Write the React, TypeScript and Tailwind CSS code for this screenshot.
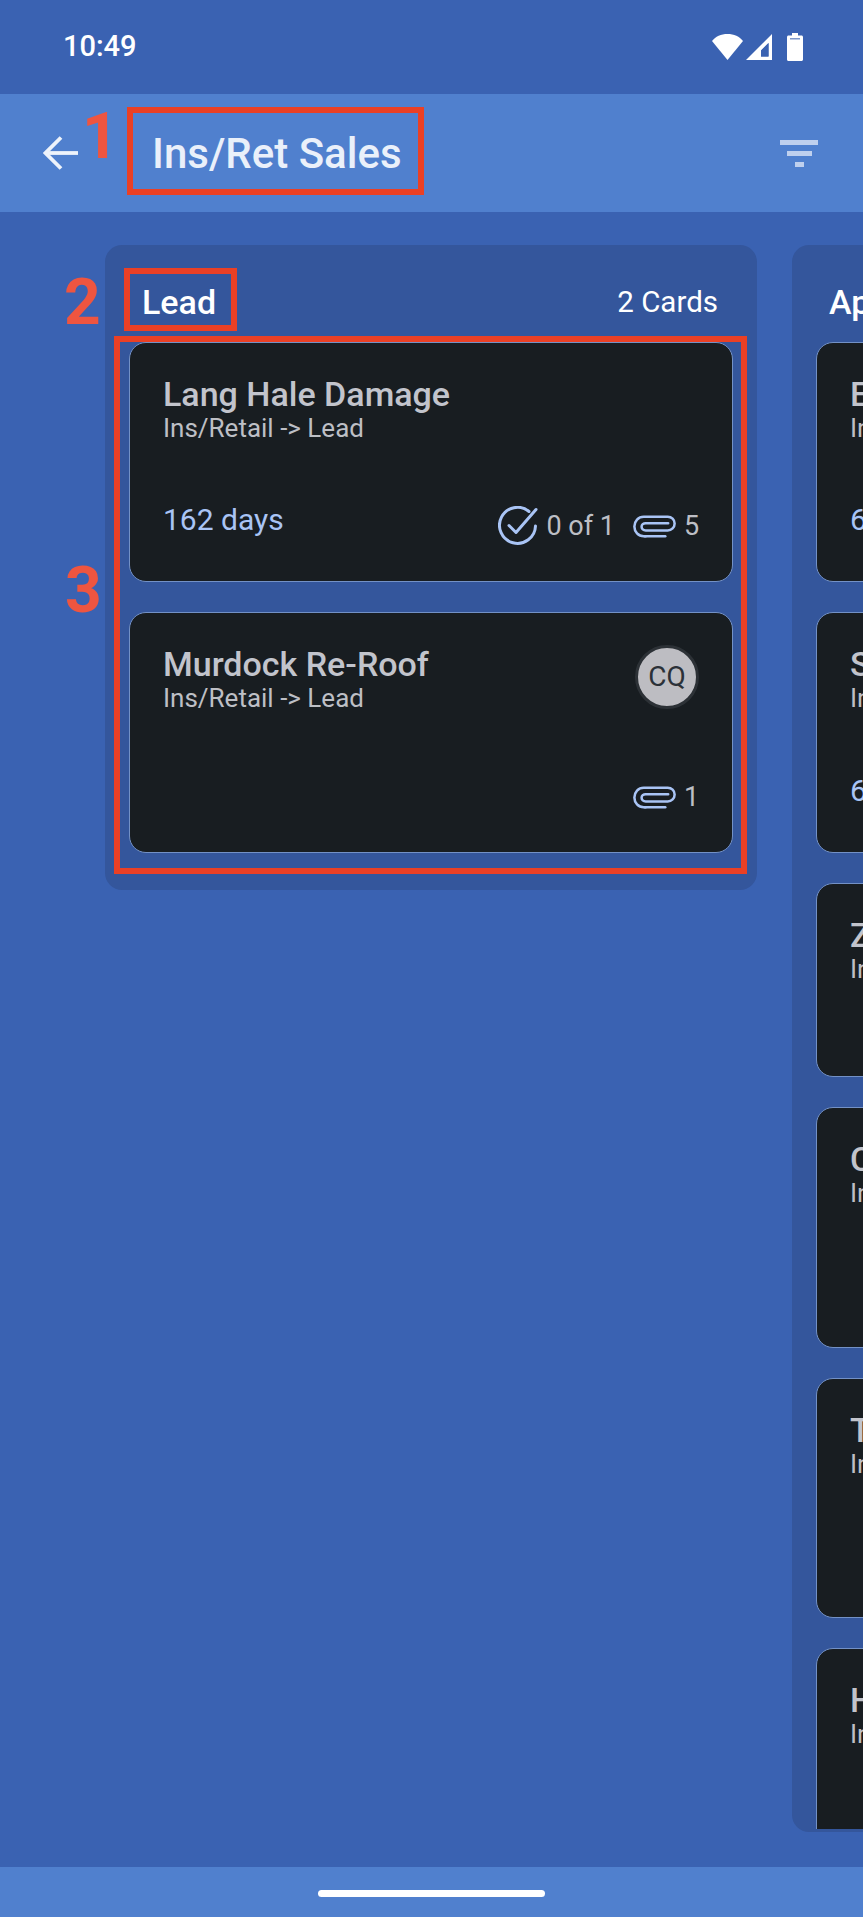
const roboto = "font-['Roboto',sans-serif]";

function ClipIcon() {
  return (
    <svg width="43" height="23" viewBox="0 0 44 23" fill="none" stroke="#A9C4F5" strokeWidth="2.6" strokeLinecap="round">
      <path d="M13 21.5H11C5.5 21.5 1.4 17 1.4 11.5C1.4 6 5.5 1.5 11 1.5H35.5C39.5 1.5 42.6 4.5 42.6 8.5C42.6 12.5 39.5 15.5 35.5 15.5H13C10.5 15.5 8.8 13.8 8.8 11.8C8.8 9.8 10.5 8.2 13 8.2H36" />
      <path d="M12 21.5H33" />
    </svg>
  );
}

function CheckIcon() {
  return (
    <svg width="40" height="40" viewBox="0 0 40 40" fill="none" stroke="#A9C4F5" strokeWidth="3" strokeLinecap="round" strokeLinejoin="round">
      <path d="M31 5.5A18 18 0 1 0 37.5 20" />
      <path d="M11 19.5L18 26.5L38 3.5" />
    </svg>
  );
}

type CardProps = {
  title: string;
  sub: string;
  height: string;
  days?: string;
  checks?: string;
  clips?: string;
  avatar?: string;
};

function Card({ title, sub, height, days, checks, clips, avatar }: CardProps) {
  return (
    <div className={`${height} shrink-0 rounded-[17px] border border-[#7391C6] bg-[#181D21] pl-[33px] pr-[34px] pt-[32px] pb-[35px] flex flex-col justify-between`}>
      <div className="flex justify-between">
        <div>
          <div className="text-[34px] leading-[38px] font-medium text-[#C2C4CC] whitespace-nowrap">{title}</div>
          <div className="text-[26px] leading-[30px] text-[#BDBFC5] whitespace-nowrap">{sub}</div>
        </div>
        {avatar && (
          <div className="w-[64px] h-[64px] -mr-[1px] rounded-full bg-[#BDBDC2] border-[3px] border-[#2C3136] flex items-center justify-center text-[28px] text-[#2B3138]">
            {avatar}
          </div>
        )}
      </div>
      <div className="flex justify-between items-center h-[40px]">
        <div className="text-[30px] leading-[32px] text-[#A9C4F5] -mt-[12px] whitespace-nowrap">{days}</div>
        <div className="flex items-center text-[27px] text-[#BDBFC5]">
          {checks && (
            <>
              <CheckIcon />
              <span className="ml-[8px] mr-[18px]">{checks}</span>
            </>
          )}
          {clips && (
            <>
              <ClipIcon />
              <span className="ml-[8px] w-[14px]">{clips}</span>
            </>
          )}
        </div>
      </div>
    </div>
  );
}

export default function App() {
  return (
    <div className={`${roboto} relative w-[863px] h-[1917px] overflow-hidden bg-[#3A62B2] flex flex-col`}>
      {/* Status bar */}
      <div className="h-[94px] shrink-0 flex items-center justify-between pl-[63px] pr-[60px] pb-[1px] text-white">
        <span className="text-[29px] font-medium">10:49</span>
        <div className="flex items-center">
          <svg width="31" height="26" viewBox="0 0 31 26" fill="white">
            <path d="M15.5 26L0 7C3.5 2.5 9 0 15.5 0S27.5 2.5 31 7Z" />
          </svg>
          <svg className="ml-[3px]" width="26" height="26" viewBox="0 0 26 26" fill="none">
            <path fillRule="evenodd" clipRule="evenodd" d="M26 0V26H0ZM22.5 9V22.5H15V16.5Z" fill="white" />
            <path d="M15 22.5H22.5V9L15 16.5Z" fill="#3A62B2" />
          </svg>
          <svg className="ml-[15px]" width="16" height="28" viewBox="0 0 16 28" fill="white">
            <path d="M5 0H11V2.5H14.5C15.3 2.5 16 3.2 16 4V26.5C16 27.3 15.3 28 14.5 28H1.5C.7 28 0 27.3 0 26.5V4C0 3.2.7 2.5 1.5 2.5H5Z" />
            <rect x="3" y="5" width="10" height="1.5" fill="#7D97CB" />
          </svg>
        </div>
      </div>

      {/* App bar */}
      <div className="h-[118px] shrink-0 bg-[#5080CE] flex items-center justify-between pl-[43px] pr-[45px]">
        <div className="flex items-center">
          <svg width="35" height="34" viewBox="0 0 35 34" fill="none" stroke="#EEF3FB" strokeWidth="3.8">
            <path d="M35 17H3" />
            <path d="M18 1.5L2.5 17L18 32.5" />
          </svg>
          <span className="ml-[74px] text-[42px] font-medium text-[#EAF0FA]">Ins/Ret Sales</span>
        </div>
        <div className="flex flex-col items-center gap-[6px]">
          <div className="w-[38px] h-[5px] bg-[#BFD0EE]" />
          <div className="w-[25px] h-[5px] bg-[#BFD0EE]" />
          <div className="w-[9px] h-[5px] bg-[#BFD0EE]" />
        </div>
      </div>

      {/* Board */}
      <div className="flex-1 min-h-0 flex items-start gap-[35px] pl-[105px] pt-[33px]">
        <div className="w-[652px] shrink-0 h-[645px] rounded-[17px] bg-[#34569C] flex flex-col pl-[24px] pr-[24px]">
          <div className="h-[97px] shrink-0 flex items-center justify-between pl-[13px] pr-[15px] pt-[17px] text-white">
            <span className="text-[34px] font-medium">Lead</span>
            <span className="text-[29.5px]">2 Cards</span>
          </div>
          <div className="flex flex-col gap-[30px]">
            <Card title="Lang Hale Damage" sub="Ins/Retail -> Lead" height="h-[240px]" days="162 days" checks="0 of 1" clips="5" />
            <Card title="Murdock Re-Roof" sub="Ins/Retail -> Lead" height="h-[241px]" clips="1" avatar="CQ" />
          </div>
        </div>

        <div className="w-[652px] shrink-0 h-[1587px] rounded-[17px] bg-[#34569C] flex flex-col pl-[24px] pr-[24px] overflow-hidden">
          <div className="h-[97px] shrink-0 flex items-center pl-[13px] pt-[17px] text-white">
            <span className="text-[34px] font-medium">Approved</span>
          </div>
          <div className="h-[1487px] overflow-hidden flex flex-col gap-[30px]">
            <Card title="E" sub="Ins/Retail" height="h-[240px]" days="6" />
            <Card title="S" sub="Ins/Retail" height="h-[241px]" days="6" />
            <Card title="Z" sub="Ins/Retail" height="h-[194px]" />
            <Card title="C" sub="Ins/Retail" height="h-[241px]" />
            <Card title="T" sub="Ins/Retail" height="h-[240px]" />
            <Card title="H" sub="Ins/Retail" height="h-[240px]" />
          </div>
        </div>
      </div>

      {/* Nav bar */}
      <div className="h-[50px] shrink-0 bg-[#5080CE] flex items-center justify-center">
        <div className="w-[227px] h-[7px] mt-[2px] rounded-full bg-white" />
      </div>

      {/* Red annotations */}
      <div className="absolute left-[127px] top-[107px] w-[297px] h-[88px] border-[6px] border-[#EA4025]" />
      <div className="absolute left-[124px] top-[268px] w-[113px] h-[63px] border-[6px] border-[#EA4025]" />
      <div className="absolute left-[114px] top-[336px] w-[633px] h-[538px] border-[6px] border-[#EA4025]" />
      <span className="absolute left-[82px] top-[101px] text-[64px] leading-[72px] font-bold text-[#EE5540]">1</span>
      <span className="absolute left-[64px] top-[267px] text-[64px] leading-[72px] font-bold text-[#EE5540]">2</span>
      <span className="absolute left-[65px] top-[555px] text-[64px] leading-[72px] font-bold text-[#EE5540]">3</span>
    </div>
  );
}
